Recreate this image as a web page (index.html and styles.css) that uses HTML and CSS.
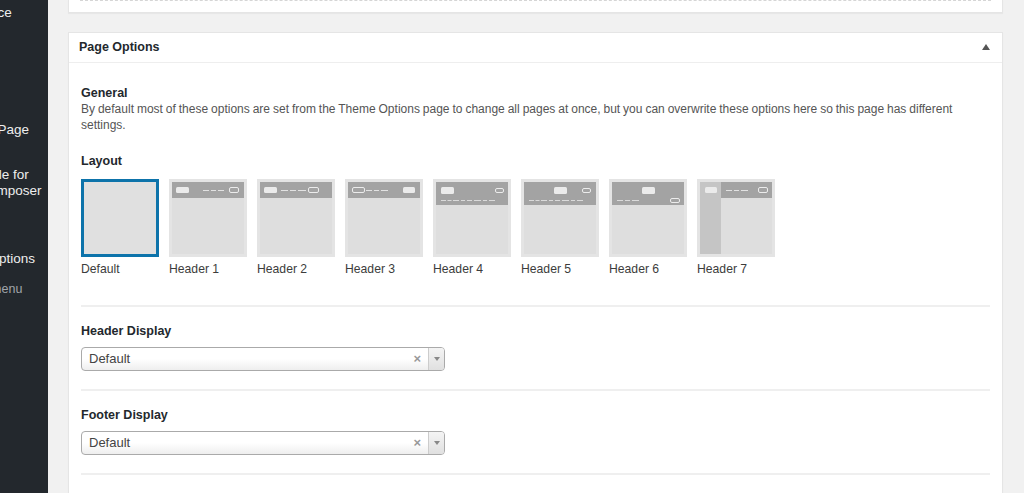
FILE: index.html
```html
<!DOCTYPE html>
<html>
<head>
<meta charset="utf-8">
<link rel="stylesheet" href="styles.css">
</head>
<body>
<div class="sidebar">
  <div class="menu">
    <div class="mi mi-1">Appearance</div>
    <div class="mi mi-2">Add New Page</div>
    <div class="mi mi-3">Visual Style for<br>Visual Composer</div>
    <div class="mi mi-4">Theme&nbsp;&nbsp;Options</div>
    <div class="mi mi-5 collapse">Collapse menu</div>
  </div>
</div>
<div class="main">
  <div class="prev-box"><div class="dashed"></div></div>

  <div class="postbox">
    <div class="postbox-head">
      <span class="postbox-title">Page Options</span>
      <span class="toggle"></span>
    </div>
    <div class="postbox-body">
      <div class="general">
        <div class="label">General</div>
        <p class="desc">By default most of these options are set from the Theme Options page to change all pages at once, but you can overwrite these options here so this page has different settings.</p>
      </div>
      <div class="layout">
        <div class="label">Layout</div>
        <div class="thumbs">
          <div class="thumb-item">
            <div class="thumb selected"></div>
            <div class="thumb-label">Default</div>
          </div>
          <div class="thumb-item">
            <div class="thumb">
              <svg viewBox="0 0 72 72" width="72" height="72">
                <rect width="72" height="16" class="band"/>
                <rect x="4" y="5" width="13" height="6" rx="1.5" class="logo"/>
                <path d="M31 8.5h6M39 8.5h5M46 8.5h6" class="dash"/>
                <rect x="57.5" y="5.5" width="9" height="5" rx="1.5" class="btn"/>
              </svg>
            </div>
            <div class="thumb-label">Header 1</div>
          </div>
          <div class="thumb-item">
            <div class="thumb">
              <svg viewBox="0 0 72 72" width="72" height="72">
                <rect width="72" height="16" class="band"/>
                <rect x="4" y="5" width="13" height="6" rx="1.5" class="logo"/>
                <path d="M21 8.5h7M30 8.5h6M38 8.5h8" class="dash"/>
                <rect x="48.5" y="5.5" width="10" height="5" rx="1.5" class="btn"/>
              </svg>
            </div>
            <div class="thumb-label">Header 2</div>
          </div>
          <div class="thumb-item">
            <div class="thumb">
              <svg viewBox="0 0 72 72" width="72" height="72">
                <rect width="72" height="16" class="band"/>
                <rect x="4.5" y="5.5" width="12" height="5" rx="1.5" class="btn"/>
                <path d="M18 8.5h6M26 8.5h5M33 8.5h7" class="dash"/>
                <rect x="55" y="5" width="12" height="6" rx="1.5" class="logo"/>
              </svg>
            </div>
            <div class="thumb-label">Header 3</div>
          </div>
          <div class="thumb-item">
            <div class="thumb">
              <svg viewBox="0 0 72 72" width="72" height="72">
                <rect width="72" height="23" class="band"/>
                <rect x="5" y="5" width="13" height="7" rx="1.5" class="logo"/>
                <rect x="59.5" y="6.5" width="8" height="4" rx="1.5" class="btn"/>
                <path d="M5 18.5h5M11.5 18.5h4M17 18.5h6M25 18.5h4M31 18.5h5M38 18.5h7M47 18.5h4M53 18.5h6" class="tiny"/>
              </svg>
            </div>
            <div class="thumb-label">Header 4</div>
          </div>
          <div class="thumb-item">
            <div class="thumb">
              <svg viewBox="0 0 72 72" width="72" height="72">
                <rect width="72" height="23" class="band"/>
                <rect x="30" y="5" width="13" height="7" rx="1.5" class="logo"/>
                <rect x="58.5" y="6.5" width="8" height="4" rx="1.5" class="btn"/>
                <path d="M5 18.5h5M11.5 18.5h4M17 18.5h6M25 18.5h4M31 18.5h5M38 18.5h7M47 18.5h4M53 18.5h6" class="tiny"/>
              </svg>
            </div>
            <div class="thumb-label">Header 5</div>
          </div>
          <div class="thumb-item">
            <div class="thumb">
              <svg viewBox="0 0 72 72" width="72" height="72">
                <rect width="72" height="23" class="band"/>
                <rect x="30" y="5" width="13" height="7" rx="1.5" class="logo"/>
                <path d="M5 18.5h6M13 18.5h5M20 18.5h7" class="tiny"/>
                <rect x="58.5" y="16.5" width="9" height="4" rx="1.5" class="btn"/>
              </svg>
            </div>
            <div class="thumb-label">Header 6</div>
          </div>
          <div class="thumb-item">
            <div class="thumb">
              <svg viewBox="0 0 72 72" width="72" height="72">
                <rect width="21" height="72" class="col"/>
                <rect x="21" width="51" height="16" class="band"/>
                <rect x="5" y="5" width="12" height="6" rx="1.5" class="logo"/>
                <path d="M26 8.5h6M34 8.5h5M41 8.5h7" class="dash"/>
                <rect x="58.5" y="5.5" width="9" height="5" rx="1.5" class="btn"/>
              </svg>
            </div>
            <div class="thumb-label">Header 7</div>
          </div>
        </div>
      </div>

      <div class="field">
        <div class="label">Header Display</div>
        <div class="select">
          <span class="select-value">Default</span>
          <span class="select-clear">×</span>
          <span class="select-arrow"><span class="caret"></span></span>
        </div>
      </div>

      <div class="field">
        <div class="label">Footer Display</div>
        <div class="select">
          <span class="select-value">Default</span>
          <span class="select-clear">×</span>
          <span class="select-arrow"><span class="caret"></span></span>
        </div>
      </div>

      <div class="field last"></div>
    </div>
  </div>
</div>
</body>
</html>
```
FILE: styles.css
```css
* { box-sizing: border-box; }
html, body { margin: 0; padding: 0; height: 100%; }
body {
  display: flex;
  height: 493px;
  overflow: hidden;
  background: #f1f1f1;
  font-family: "Liberation Sans", Arial, sans-serif;
  font-size: 13px;
  color: #444;
}

/* sidebar */
.sidebar {
  width: 48px;
  flex-shrink: 0;
  background: #23282d;
  overflow: hidden;
}
.menu {
  width: 160px;
  margin-left: -61px;
  color: #eee;
  font-size: 13.5px;
  line-height: 16px;
  white-space: nowrap;
}
.mi-1 { margin-top: 5px; }
.mi-2 { margin-top: 101px; }
.mi-3 { margin-top: 29px; }
.mi-4 { margin-top: 52px; }
.mi-5 { margin-top: 14px; }
.collapse { color: #a0a5aa; font-size: 12.5px; }

/* main */
.main {
  flex: 1;
  padding: 0 21px 0 20px;
}
.prev-box {
  height: 13px;
  background: #fff;
  border: 1px solid #e5e5e5;
  border-top: 0;
  box-shadow: 0 1px 1px rgba(0,0,0,.04);
  padding: 0 11px;
}
.dashed {
  border-top: 1px dashed #d5d5d5;
}

.postbox {
  margin-top: 19px;
  background: #fff;
  border: 1px solid #e5e5e5;
  box-shadow: 0 1px 1px rgba(0,0,0,.04);
  height: 600px;
}
.postbox-head {
  height: 30px;
  display: flex;
  align-items: center;
  justify-content: space-between;
  padding: 0 12px 0 10px;
  border-bottom: 1px solid #eee;
}
.postbox-title {
  font-size: 12.5px;
  font-weight: bold;
  color: #23282d;
  line-height: 30px;
  margin-top: -2px;
}
.toggle {
  width: 0;
  height: 0;
  border-left: 4px solid transparent;
  border-right: 4px solid transparent;
  border-bottom: 6px solid #555;
  margin-top: -2px;
}

.postbox-body {
  padding: 22px 12px 0;
}
.label {
  font-size: 12.5px;
  font-weight: bold;
  color: #23282d;
  line-height: 16px;
}
.desc {
  margin: 0;
  font-size: 12px;
  word-spacing: -0.4px;
  line-height: 16px;
  color: #555;
}

.layout {
  margin-top: 20px;
  padding-bottom: 28px;
}
.thumbs {
  display: flex;
  gap: 10px;
  margin-top: 10px;
}
.thumb {
  width: 78px;
  height: 78px;
  border: 3px solid #e4e4e4;
  background: #dedede;
}
.thumb svg { display: block; }
.thumb.selected {
  border-color: #0d73aa;
  background: #e0e0e0;
}
.band { fill: #a3a3a3; }
.col { fill: #c5c5c5; }
.logo { fill: #ebebeb; }
.dash { stroke: #e2e2e2; stroke-width: 1; fill: none; }
.tiny { stroke: #dadada; stroke-width: 1; fill: none; }
.btn { fill: none; stroke: #ececec; stroke-width: 1; }
.thumb-label {
  margin-top: 4px;
  font-size: 12.2px;
  line-height: 16px;
  color: #3c3c3c;
}

.field {
  border-top: 2px solid #efefef;
  padding: 16px 0 18px;
}
.field.last { padding: 0; }
.select {
  margin-top: 8px;
  width: 364px;
  height: 24px;
  border: 1px solid #aaa;
  border-radius: 4px;
  background: linear-gradient(#fff 50%, #eee);
  display: flex;
  align-items: center;
  overflow: hidden;
}
.select-value {
  flex: 1;
  padding-left: 7px;
  color: #444;
  line-height: 22px;
}
.select-clear {
  color: #999;
  font-size: 13px;
  font-weight: bold;
  padding-right: 7px;
  line-height: 22px;
}
.select-arrow {
  width: 16px;
  height: 22px;
  border-left: 1px solid #ccc;
  background: linear-gradient(#f4f4f4, #e0e0e0);
  display: flex;
  align-items: center;
  justify-content: center;
}
.caret {
  width: 0;
  height: 0;
  border-left: 3px solid transparent;
  border-right: 3px solid transparent;
  border-top: 4px solid #888;
}
```
